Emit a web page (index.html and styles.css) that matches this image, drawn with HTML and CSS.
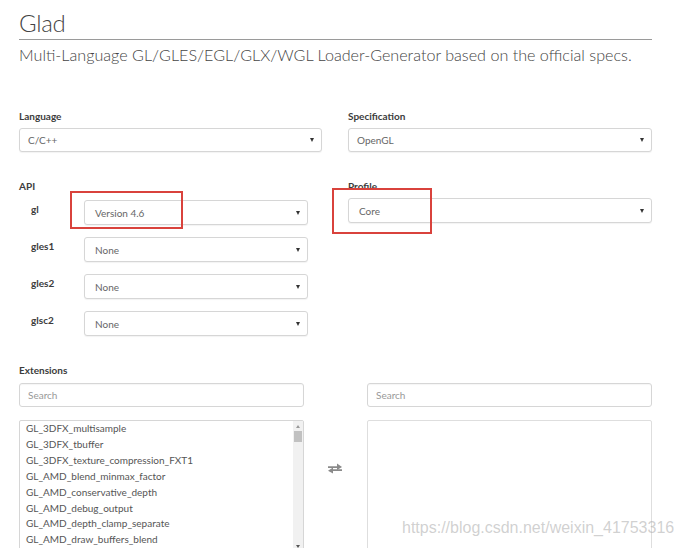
FILE: index.html
```html
<!DOCTYPE html>
<html>
<head>
<meta charset="utf-8">
<link rel="stylesheet" href="styles.css">
</head>
<body>
<div class="page">
  <h1 class="title">Glad</h1>
  <p class="subtitle">Multi-Language GL/GLES/EGL/GLX/WGL Loader-Generator based on the official specs.</p>

  <div class="two first">
    <div class="col">
      <div class="label">Language</div>
      <div class="select"><span>C/C++</span><i class="caret"></i></div>
    </div>
    <div class="col">
      <div class="label">Specification</div>
      <div class="select"><span>OpenGL</span><i class="caret"></i></div>
    </div>
  </div>

  <div class="two second">
    <div class="col">
      <div class="label">API</div>
      <div class="api-list">
        <div class="api-item"><span class="api-name">gl</span><div class="select sel-api"><span>Version 4.6</span><i class="caret"></i></div></div>
        <div class="api-item"><span class="api-name">gles1</span><div class="select sel-api"><span>None</span><i class="caret"></i></div></div>
        <div class="api-item"><span class="api-name">gles2</span><div class="select sel-api"><span>None</span><i class="caret"></i></div></div>
        <div class="api-item"><span class="api-name">glsc2</span><div class="select sel-api"><span>None</span><i class="caret"></i></div></div>
      </div>
    </div>
    <div class="col">
      <div class="label">Profile</div>
      <div class="select sel-profile"><span>Core</span><i class="caret"></i></div>
    </div>
  </div>

  <div class="ext">
    <div class="label">Extensions</div>
    <div class="ext-grid">
      <div class="search">Search</div>
      <div></div>
      <div class="search">Search</div>
      <div class="listbox">
        <div class="items">
          <div>GL_3DFX_multisample</div>
          <div>GL_3DFX_tbuffer</div>
          <div>GL_3DFX_texture_compression_FXT1</div>
          <div>GL_AMD_blend_minmax_factor</div>
          <div>GL_AMD_conservative_depth</div>
          <div>GL_AMD_debug_output</div>
          <div>GL_AMD_depth_clamp_separate</div>
          <div>GL_AMD_draw_buffers_blend</div>
        </div>
        <div class="scrollbar">
          <i class="sb-up"></i>
          <div class="sb-thumb"></div>
          <div class="sb-fill"></div>
          <i class="sb-down"></i>
        </div>
      </div>
      <div class="swap">
        <svg width="16" height="12" viewBox="0 0 16 12">
          <path d="M1 4.2 L10 4.2 L10 1.5 L15 5 L10 8 L10 6 L1 6 Z" fill="#8a8a8a"/>
          <path d="M15 7.2 L6 7.2 L6 5.5 L1 8.8 L6 11.5 L6 9 L15 9 Z" fill="#8a8a8a"/>
        </svg>
      </div>
      <div class="listbox right"></div>
    </div>
  </div>
</div>

<div class="annot annot-1"></div>
<div class="annot annot-2"></div>
<div class="watermark">https://blog.csdn.net/weixin_41753316</div>
</body>
</html>
```

FILE: styles.css
```css
html, body {
  margin: 0;
  padding: 0;
  overflow: hidden;
  background: #fff;
}
body {
  font-family: Lato, "Open Sans", sans-serif;
  color: #444;
  height: 548px;
  position: relative;
}
.page {
  width: 633px;
  margin-left: 19px;
}
.title {
  margin: 0;
  padding-top: 9px;
  padding-bottom: 2px;
  font-size: 24px;
  line-height: 28px;
  font-weight: 300;
  color: #444;
  border-bottom: 1px solid #9a9a9a;
  letter-spacing: -0.3px;
}
.subtitle {
  margin: 5px 0 0 0;
  font-size: 16.15px;
  line-height: 20px;
  font-weight: 300;
  color: #444;
  white-space: nowrap;
}
.two {
  display: grid;
  grid-template-columns: 303px 304px;
  column-gap: 26px;
}
.first {
  margin-top: 45px;
}
.second {
  margin-top: 28px;
}
.label {
  font-size: 10px;
  line-height: 12px;
  font-weight: 700;
  color: #3c3c3c;
  margin-bottom: 6px;
}
.select {
  height: 24px;
  box-sizing: border-box;
  border: 1px solid #d6d6d6;
  border-radius: 3px;
  box-shadow: 0 1px 1px rgba(0,0,0,0.05);
  display: flex;
  align-items: center;
  justify-content: space-between;
  padding: 0 7px 0 8px;
  font-size: 10px;
  color: #666;
  background: #fff;
}
.caret {
  width: 0;
  height: 0;
  border-left: 2px solid transparent;
  border-right: 2px solid transparent;
  border-top: 4px solid #333;
}
.api-list {
  display: flex;
  flex-direction: column;
  gap: 12px;
  padding-top: 2px;
}
.api-item {
  display: flex;
  align-items: flex-start;
  padding-left: 12px;
}
.api-name {
  width: 53px;
  font-size: 10px;
  line-height: 12px;
  font-weight: 700;
  color: #3c3c3c;
  padding-top: 3px;
}
.sel-api {
  width: 224px;
  height: 25px;
  padding-left: 10px;
}
.sel-profile {
  margin-top: 1px;
  height: 25px;
  padding-left: 10px;
}
.ext {
  margin-top: 28px;
}
.ext .label {
  margin-bottom: 7px;
}
.ext-grid {
  display: grid;
  grid-template-columns: 285px 63px 285px;
  grid-template-rows: 24px auto;
  row-gap: 13px;
}
.search {
  box-sizing: border-box;
  height: 24px;
  border: 1px solid #d6d6d6;
  border-radius: 3px;
  font-size: 10px;
  line-height: 22px;
  padding-left: 8px;
  color: #999;
  box-shadow: inset 0 1px 1px rgba(0,0,0,0.04);
}
.listbox {
  box-sizing: border-box;
  height: 131px;
  border: 1px solid #d6d6d6;
  border-radius: 2px;
  display: flex;
  overflow: hidden;
}
.listbox.right {
  border-color: #dedede;
}
.items {
  flex: 1;
  padding-left: 6px;
  font-size: 10px;
  line-height: 15.9px;
  color: #555;
  overflow: hidden;
  white-space: nowrap;
}
.scrollbar {
  width: 10px;
  background: #f1f1f1;
  display: flex;
  flex-direction: column;
  align-items: center;
}
.sb-up {
  margin-top: 4px;
  width: 0;
  height: 0;
  border-left: 2px solid transparent;
  border-right: 2px solid transparent;
  border-bottom: 3px solid #999;
}
.sb-thumb {
  margin-top: 3px;
  width: 8px;
  height: 11px;
  background: #c1c1c1;
}
.sb-fill {
  flex: 1;
}
.sb-down {
  margin-bottom: 2px;
  width: 0;
  height: 0;
  border-left: 2px solid transparent;
  border-right: 2px solid transparent;
  border-top: 3px solid #555;
}
.swap {
  display: flex;
  justify-content: center;
  padding-top: 42px;
  padding-right: 2px;
}
.annot {
  position: absolute;
  border: 2px solid #d9423c;
  box-sizing: border-box;
}
.annot-1 {
  left: 70px;
  top: 191px;
  width: 113px;
  height: 38px;
}
.annot-2 {
  left: 332px;
  top: 188px;
  width: 100px;
  height: 46px;
}
.watermark {
  position: absolute;
  left: 402px;
  top: 519px;
  font-family: "Liberation Sans", Arial, sans-serif;
  font-size: 16px;
  color: rgba(170,170,170,0.55);
  white-space: nowrap;
}
```
